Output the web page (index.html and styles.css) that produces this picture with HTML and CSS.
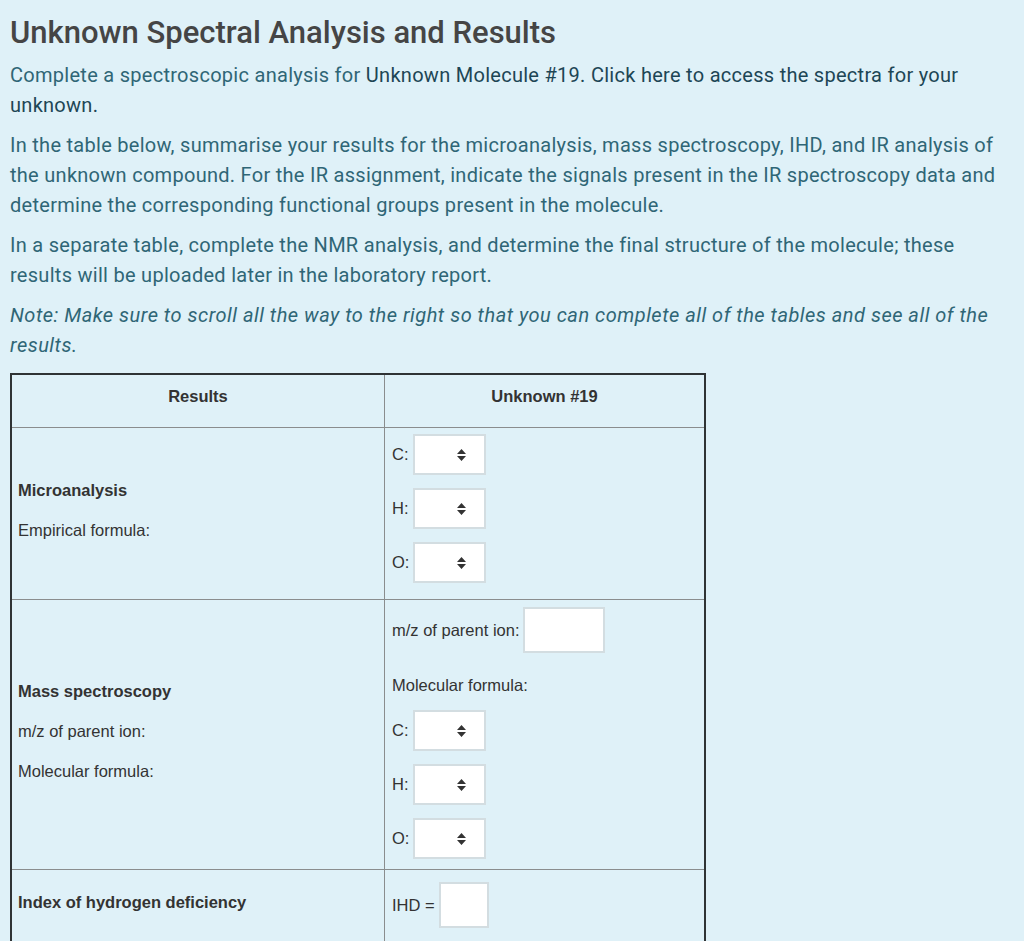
FILE: index.html
```html
<!DOCTYPE html>
<html lang="en">
<head>
    <meta charset="UTF-8">
    <meta name="viewport" content="width=device-width, initial-scale=1.0">
    <title>Unknown Spectral Analysis and Results</title>
    <link rel="stylesheet" href="styles.css">
</head>
<body>
    <div class="page">
        <h1>Unknown Spectral Analysis and Results</h1>
        <p>Complete a spectroscopic analysis for <span class="dark">Unknown Molecule #19. Click here to access the spectra for your</span> <span class="dark">unknown.</span></p>
        <p>In the table below, summarise your results for the microanalysis, mass spectroscopy, IHD, and IR analysis of the unknown compound. For the IR assignment, indicate the signals present in the IR spectroscopy data and determine the corresponding functional groups present in the molecule.</p>
        <p>In a separate table, complete the NMR analysis, and determine the final structure of the molecule; these results will be uploaded later in the laboratory report.</p>
        <p class="note">Note: Make sure to scroll all the way to the right so that you can complete all of the tables and see all of the results.</p>

        <table class="results">
            <tr class="head">
                <th>Results</th>
                <th>Unknown #19</th>
            </tr>
            <tr>
                <td class="label">
                    <div class="title">Microanalysis</div>
                    <div class="sub">Empirical formula:</div>
                </td>
                <td class="answer micro">
                    <div class="line">C: <span class="select"><svg width="9" height="12" viewBox="0 0 9 12"><path d="M4.5 0L9 5H0z M4.5 12L0 7h9z" fill="#333"/></svg></span></div>
                    <div class="line">H: <span class="select"><svg width="9" height="12" viewBox="0 0 9 12"><path d="M4.5 0L9 5H0z M4.5 12L0 7h9z" fill="#333"/></svg></span></div>
                    <div class="line">O: <span class="select"><svg width="9" height="12" viewBox="0 0 9 12"><path d="M4.5 0L9 5H0z M4.5 12L0 7h9z" fill="#333"/></svg></span></div>
                </td>
            </tr>
            <tr>
                <td class="label">
                    <div class="title">Mass spectroscopy</div>
                    <div class="sub">m/z of parent ion:</div>
                    <div class="sub">Molecular formula:</div>
                </td>
                <td class="answer mass">
                    <div class="line">m/z of parent ion: <span class="input wide"></span></div>
                    <div class="formula">Molecular formula:</div>
                    <div class="selects">
                        <div class="line">C: <span class="select"><svg width="9" height="12" viewBox="0 0 9 12"><path d="M4.5 0L9 5H0z M4.5 12L0 7h9z" fill="#333"/></svg></span></div>
                        <div class="line">H: <span class="select"><svg width="9" height="12" viewBox="0 0 9 12"><path d="M4.5 0L9 5H0z M4.5 12L0 7h9z" fill="#333"/></svg></span></div>
                        <div class="line">O: <span class="select"><svg width="9" height="12" viewBox="0 0 9 12"><path d="M4.5 0L9 5H0z M4.5 12L0 7h9z" fill="#333"/></svg></span></div>
                    </div>
                </td>
            </tr>
            <tr>
                <td class="label">
                    <div class="title">Index of hydrogen deficiency</div>
                </td>
                <td class="answer ihd">
                    <div class="line">IHD = <span class="input"></span></div>
                </td>
            </tr>
        </table>
    </div>
</body>
</html>
```

FILE: styles.css
```css
body {
    margin: 0;
    background: #dff1f8;
    font-family: 'Roboto', 'Liberation Sans', sans-serif;
}
.page {
    padding: 13px 10px 40px 10px;
}
h1 {
    margin: 0 0 7px 0;
    font-size: 31px;
    font-weight: 500;
    line-height: 40px;
    color: #454545;
}
p {
    margin: 0 0 10px 0;
    font-size: 20px;
    line-height: 30px;
    letter-spacing: 0.28px;
    color: #2f6676;
}
.dark {
    color: #1d4655;
}
.note {
    font-style: italic;
    letter-spacing: 0.5px;
    margin-bottom: 13px;
}
.results {
    border-collapse: collapse;
    border: 2px solid #2f3335;
    width: 696px;
    font-family: 'Liberation Sans', Arial, sans-serif;
    font-size: 16.5px;
    color: #333;
}
.results th,
.results td {
    border: 1px solid #8a8d8e;
    vertical-align: middle;
}
.results th {
    height: 43px;
    font-weight: bold;
    text-align: center;
    padding: 0 8px 9px 8px;
}
.results th:first-child,
.results td.label {
    width: 356px;
}
.results td.label {
    padding: 0 6px 8px 6px;
}
.label .title {
    font-weight: bold;
    line-height: 20px;
}
.label .sub {
    margin-top: 20px;
    line-height: 20px;
}
.results td.answer {
    padding: 6px 8px 16px 7px;
    vertical-align: top;
}
.line {
    display: flex;
    align-items: center;
    gap: 4px;
}
.micro .line + .line,
.selects .line + .line {
    margin-top: 13px;
}
.select {
    display: inline-flex;
    align-items: center;
    justify-content: flex-end;
    box-sizing: border-box;
    width: 73px;
    height: 41px;
    padding-right: 18px;
    background: #fff;
    border: 2px solid #d3dde1;
}
.input {
    display: inline-block;
    box-sizing: border-box;
    width: 50px;
    height: 46px;
    background: #fff;
    border: 2px solid #d3dde1;
}
.input.wide {
    width: 82px;
}
.results td.mass {
    padding-top: 7px;
    padding-bottom: 10px;
}
.formula {
    margin-top: 22px;
    line-height: 20px;
}
.selects {
    margin-top: 15px;
}
.results td.ihd {
    padding-top: 12px;
    padding-bottom: 14px;
}
```
